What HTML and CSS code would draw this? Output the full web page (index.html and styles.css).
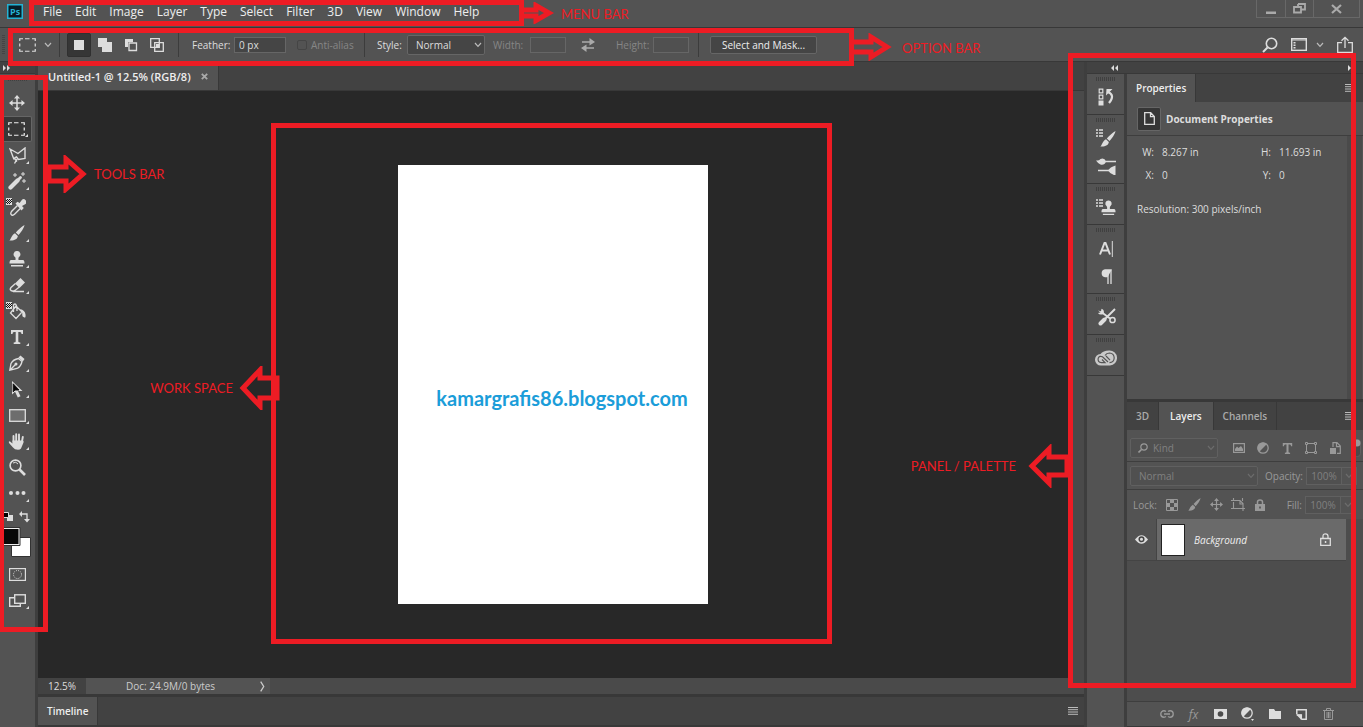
FILE: index.html
```html
<!DOCTYPE html>
<html lang="en">

<head>
    <meta charset="UTF-8">
    <meta name="viewport" content="width=device-width, initial-scale=1.0">
    <title>Untitled-1 @ 12.5% (RGB/8)</title>
    <link rel="stylesheet" href="styles.css">
</head>

<body>

    <!-- Shared icons -->
    <svg class="sprite" aria-hidden="true">
        <symbol id="chevron" viewBox="0 0 8 6"><path d="M1 1l3 3.4L7 1" fill="none" stroke="currentColor" stroke-width="1.2"/></symbol>
        <symbol id="corner" viewBox="0 0 3 3"><path d="M3 0v3H0z" fill="currentColor"/></symbol>
        <symbol id="menu" viewBox="0 0 10 8"><path d="M0 .5h10M0 2.7h10M0 5h10M0 7.3h10" stroke="currentColor"/></symbol>
        <symbol id="move" viewBox="0 0 16 16"><path d="M8 2v12M2 8h12" stroke="currentColor" stroke-width="1.5"/><path d="M8 0l3 3.6H5zM8 16l3-3.6H5zM0 8l3.6-3v6zM16 8l-3.6-3v6z" fill="currentColor"/></symbol>
        <symbol id="brush" viewBox="0 0 16 16"><path d="M15.500 0c-.5 3-3.500 7.500-6 10L6.800 7.500C9 5 12.500 1.500 15.500 0zM6 8.200L8.800 11c0 3-3.800 5-8.500 4.500 2-1.500 2-5.600 5.700-7.300z" fill="currentColor"/></symbol>
        <symbol id="stamp" viewBox="0 0 16 16"><path d="M8 0a3.300 3.300 0 0 1 2 6c-.7.8-.6 1.600-.5 3H14q1.500 0 1.500 3.500H.5Q.5 9 2 9h4.500c.1-1.400.2-2.200-.5-3a3.300 3.300 0 0 1 2-6zM2 14h12v1.500H2z" fill="currentColor"/></symbol>
        <symbol id="type" viewBox="0 0 14 14"><path d="M1 0h12v4h-1.500q0-2-1.500-2H8.300v9.500q0 1 2 1V14H3.700v-1.500q2 0 2-1V2H4Q2.500 2 2.500 4H1z" fill="currentColor"/></symbol>
        <symbol id="checker" viewBox="0 0 6 7"><path d="M0 0h6v7H0z" fill="#ddd"/><path d="M1 1h1v1H1zM3 1h1v1H3zM5 1h1v1H5zM0 2h1v1H0zM2 2h1v1H2zM4 2h1v1H4zM1 3h1v1H1zM3 3h1v1H3zM5 3h1v1H5zM0 4h1v1H0zM2 4h1v1H2zM4 4h1v1H4zM1 5h1v1H1zM3 5h1v1H3z" fill="#111"/></symbol>
        <symbol id="list" viewBox="0 0 7 8"><path d="M0 1h2M0 4h2M0 7h2M3 1h4M3 4h4M3 7h4" stroke="currentColor" stroke-width="1.5"/></symbol>
        <symbol id="half" viewBox="0 0 12 12"><circle cx="6" cy="6" r="5.200" fill="none" stroke="currentColor" stroke-width="1.300"/><path d="M9.900 2.100A5.500 5.500 0 0 0 2.100 9.900z" fill="currentColor"/></symbol>
    </svg>

    <header class="menu-bar">
        <svg class="logo" width="16" height="15" viewBox="0 0 16 15"><rect x=".75" y=".75" width="14.500" height="13.500" fill="#061d27" stroke="#25b2d3" stroke-width="1.500"/><text x="3" y="11" class="logo-text">Ps</text></svg>
        <nav class="menus">
            <button>File</button>
            <button>Edit</button>
            <button>Image</button>
            <button>Layer</button>
            <button>Type</button>
            <button>Select</button>
            <button>Filter</button>
            <button>3D</button>
            <button>View</button>
            <button>Window</button>
            <button>Help</button>
        </nav>
        <div class="window-buttons">
            <button aria-label="Minimize"><svg width="12" height="12" viewBox="0 0 12 12"><path d="M1 8.500h10v2.500H1z" fill="#aaa"/></svg></button>
            <button aria-label="Restore"><svg width="13" height="11" viewBox="0 0 13 11"><path d="M5 1h7v5.500H8M1 4h7v5.500H1zM5 1v3" fill="none" stroke="#aaa" stroke-width="1.800"/></svg></button>
            <button class="wide" aria-label="Close"><svg width="11" height="10" viewBox="0 0 11 10"><path d="M1 1l9 8M10 1L1 9" stroke="#aaa" stroke-width="2.200"/></svg></button>
        </div>
    </header>

    <section class="option-bar">
        <span class="grip-side"></span>
        <button class="preset" aria-label="Tool preset">
            <svg width="17" height="14" viewBox="0 0 17 14"><path d="M.75 3V.75H4M6 .75h4.500M13 .75h3.250V3M16.250 5.500v3M16.250 11v2.250H13M10.500 13.250H6M4 13.250H.75V11M.75 8.500v-3" fill="none" stroke="#ddd" stroke-width="1.200"/></svg>
            <svg class="chev" width="8" height="6"><use href="#chevron"/></svg>
        </button>
        <div class="modes">
            <button class="on" aria-label="New selection"><svg width="14" height="14"><path d="M2 2h10v10H2z" fill="#ddd"/></svg></button>
            <button aria-label="Add to selection"><svg width="14" height="14"><path d="M0 0h9v4h5v10H4V9H0z" fill="#ddd"/></svg></button>
            <button aria-label="Subtract from selection"><svg width="14" height="14"><path d="M1 1h8v3H4v5H1z" fill="#ddd"/><path d="M5 5h7.500v7.500H5z" fill="none" stroke="#ddd" stroke-width="1.300"/></svg></button>
            <button aria-label="Intersect with selection"><svg width="14" height="14"><path d="M.7.7h8.600v8.600H.7zM4.700 4.700h8.600v8.600H4.700z" fill="none" stroke="#ddd" stroke-width="1.300"/><path d="M6 6h3v3H6z" fill="#ddd"/></svg></button>
        </div>
        <div class="feather">
            <label for="feather">Feather:</label>
            <input type="text" id="feather" value="0 px">
        </div>
        <div class="alias off">
            <input type="checkbox" id="alias" disabled>
            <label for="alias">Anti-alias</label>
        </div>
        <div class="style">
            <label for="style">Style:</label>
            <span class="select">
                <select id="style">
                    <option>Normal</option>
                </select>
                <svg class="chev" width="8" height="6"><use href="#chevron"/></svg>
            </span>
        </div>
        <div class="size off">
            <label for="width">Width:</label>
            <input type="text" id="width" disabled>
        </div>
        <button class="swap" aria-label="Swap width and height"><svg width="14" height="14" viewBox="0 0 14 14"><path d="M1 4h9M4 10h9" stroke="#aaa" stroke-width="1.300"/><path d="M8.500 0L14 4 8.500 7.500zM5.500 6.500L0 10l5.500 4z" fill="#aaa"/></svg></button>
        <div class="size off">
            <label for="height">Height:</label>
            <input type="text" id="height" disabled>
        </div>
        <div class="mask">
            <button>Select and Mask...</button>
        </div>
        <div class="app-buttons">
            <button aria-label="Search"><svg width="16" height="16" viewBox="0 0 16 16"><circle cx="9.500" cy="6.500" r="5.200" fill="none" stroke="#ddd" stroke-width="1.600"/><path d="M5.500 10.500L1 15" stroke="#ddd" stroke-width="2"/></svg></button>
            <button aria-label="Workspace">
                <svg width="16" height="13" viewBox="0 0 16 13"><rect x=".7" y=".7" width="14.600" height="11.600" fill="none" stroke="#ddd" stroke-width="1.400"/><path d="M1 2h14" stroke="#ddd"/><path d="M2.500 4h2v1.500h-2zM2.500 6.500h2V8h-2zM2.500 9h2v1.500h-2z" fill="#ddd"/></svg>
                <svg class="chev" width="8" height="6"><use href="#chevron"/></svg>
            </button>
            <button aria-label="Share"><svg width="16" height="17" viewBox="0 0 16 17"><path d="M5 6.700H.7v9.600h14.600V6.700H11M8 12V1.500M4.500 4.800L8 1.300l3.500 3.500" fill="none" stroke="#ddd" stroke-width="1.300"/></svg></button>
        </div>
    </section>

    <main class="workspace">

        <aside class="tools">
            <button class="collapse" aria-label="Expand tools"><svg width="7" height="6" viewBox="0 0 7 6"><path d="M0 0l3 3-3 3zM4 0l3 3-3 3z" fill="#ddd"/></svg></button>
            <div class="tool-list">
                <span class="grip"></span>
                <button aria-label="Move"><svg width="16" height="16"><use href="#move"/></svg></button>
                <button class="on" aria-label="Rectangular marquee"><svg width="17" height="14" viewBox="0 0 17 14"><path d="M.75 3V.75H4M6 .75h4.500M13 .75h3.250V3M16.250 5.500v3M16.250 11v2.250H13M10.500 13.250H6M4 13.250H.75V11M.75 8.500v-3" fill="none" stroke="#eee" stroke-width="1.200"/></svg><svg class="corner"><use href="#corner"/></svg></button>
                <button aria-label="Lasso"><svg width="17" height="17" viewBox="0 0 17 17"><path d="M5 12.500L1 2l8 4.500L16 1v10.500l-6.500 1-2-2.500-2 1M8 12l-2.500 4.500M5 11l3 3.500" fill="none" stroke="currentColor" stroke-width="1.400"/></svg><svg class="corner"><use href="#corner"/></svg></button>
                <button aria-label="Magic wand"><svg width="18" height="18" viewBox="0 0 18 18"><path d="M2.500 15.500l7-7" stroke="currentColor" stroke-width="4.200" stroke-linecap="round"/><path d="M10.500 7.500l2-2" stroke="currentColor" stroke-width="2.800" stroke-linecap="round"/><path d="M7 1v4M5 3h4M15 0v4M13 2h4M16 7v4M14 9h4" stroke="currentColor"/></svg><svg class="corner"><use href="#corner"/></svg></button>
                <button aria-label="Eyedropper"><svg class="badge"><use href="#checker"/></svg><svg width="17" height="17" viewBox="0 0 17 17"><path d="M8.500 6.500l-6 6q-1.500 2.500 0 3.300 1.500 1 3-.5l6-6" fill="none" stroke="currentColor" stroke-width="1.400"/><path d="M6.500 4.500l2-1.800L10.600 4l2-2.800q2-2.200 4 0t0 3.700L13 7l1.800 2-2.300 2.500z" fill="currentColor"/></svg></button>
                <button aria-label="Brush"><svg width="16" height="16"><use href="#brush"/></svg><svg class="corner"><use href="#corner"/></svg></button>
                <button aria-label="Clone stamp"><svg width="16" height="16"><use href="#stamp"/></svg><svg class="corner"><use href="#corner"/></svg></button>
                <button aria-label="Eraser"><svg width="17" height="15" viewBox="0 0 17 15"><path d="M6 5.500L11.500 0l4.500 4.500L10.500 10z" fill="currentColor"/><path d="M6.500 5.500L2 9.500q-1.500 2 0 3l2 .7L6 12.500l4-3.300M4 13.500h11" fill="none" stroke="currentColor" stroke-width="1.400"/></svg><svg class="corner"><use href="#corner"/></svg></button>
                <button aria-label="Paint bucket"><svg class="badge"><use href="#checker"/></svg><svg width="18" height="17" viewBox="0 0 18 17"><path d="M8 3l6 6-6 6.500L2.500 10zM5.500 9V3q0-2 1.500-2 2 0 2 7" fill="none" stroke="currentColor" stroke-width="1.300"/><path d="M12 6q5 1 5.500 5.500t-2 2.500q-1.500 0-1.200-4z" fill="currentColor"/></svg></button>
                <button aria-label="Type"><svg width="14" height="14"><use href="#type"/></svg><svg class="corner"><use href="#corner"/></svg></button>
                <button aria-label="Pen"><svg width="16" height="16" viewBox="0 0 16 16"><path d="M.8 15.200L2 8.500Q4 4.500 9.500 3.500l3.500 3q-1 5-5 7zM.8 15.200L6.500 9.500" fill="none" stroke="currentColor" stroke-width="1.300"/><circle cx="7" cy="9" r="1.500" fill="currentColor"/><path d="M9.500 2.500L11.500.5l4 3.500-1.700 2.500z" fill="currentColor"/></svg><svg class="corner"><use href="#corner"/></svg></button>
                <button aria-label="Path selection"><svg width="12" height="17" viewBox="0 0 12 17"><path d="M1 0v13.500l3-2.800L6.800 16.500l2.700-1.200L7 10h4.500z" fill="#ddd"/><path d="M2.200 2.800v8l1.800-1.800h4z" fill="#050505" stroke="#111"/></svg><svg class="corner"><use href="#corner"/></svg></button>
                <button aria-label="Rectangle"><svg width="17" height="13" viewBox="0 0 17 13"><rect x=".7" y=".7" width="15.600" height="11.600" fill="#6d6d6d" stroke="currentColor" stroke-width="1.300"/></svg><svg class="corner"><use href="#corner"/></svg></button>
                <button aria-label="Hand"><svg width="18" height="17" viewBox="0 0 18 17"><path d="M5.500 9V3M8.200 8V1.200M11 8V1.500M13.800 9.500L14.800 4" stroke="currentColor" stroke-width="1.900" stroke-linecap="round"/><path d="M4.500 7.500h9.800q2.200 0 .8 3L13 15.500q-1 1.300-3 1.300-3.500 0-5-2.300L1 10q-.8-1.700.8-1.700L4.500 10.500z" fill="currentColor"/></svg><svg class="corner"><use href="#corner"/></svg></button>
                <button aria-label="Zoom"><svg width="17" height="17" viewBox="0 0 17 17"><circle cx="6.500" cy="6.500" r="5.400" fill="none" stroke="currentColor" stroke-width="1.600"/><path d="M10.500 10.500l5.500 5.500" stroke="currentColor" stroke-width="2.600"/><path d="M4 4q3-2 5 1" fill="none" stroke="currentColor"/></svg></button>
                <button aria-label="Edit toolbar"><svg width="17" height="4" viewBox="0 0 17 4"><g fill="currentColor"><circle cx="2" cy="2" r="2"/><circle cx="8.500" cy="2" r="2"/><circle cx="14.500" cy="2" r="2"/></g></svg><svg class="corner"><use href="#corner"/></svg></button>
                <div class="swatches">
                    <button aria-label="Default colors, swap colors"><svg width="28" height="12" viewBox="0 0 28 12"><path d="M4 4h6v6H4z" fill="#ddd"/><path d="M.5 1.500h5v5h-5z" fill="#000" stroke="#ddd"/><path d="M18 3h6v6" fill="none" stroke="#ddd" stroke-width="1.300"/><path d="M19 0v6l-3-3zM21 8h6l-3 3.500z" fill="#ddd"/></svg></button>
                    <button aria-label="Foreground and background color"><svg width="28" height="31" viewBox="0 0 28 31"><path d="M8.500 10.500h19v19h-19z" fill="#fff" stroke="#333"/><path d="M-3 .5h20v18H-3z" fill="#eee" stroke="#333"/><path d="M-3 2h18.500v15H-3z" fill="#080808"/></svg></button>
                </div>
                <button aria-label="Quick mask"><svg width="17" height="13" viewBox="0 0 17 13"><rect x=".6" y=".6" width="15.800" height="11.800" fill="none" stroke="currentColor" stroke-width="1.200"/><circle cx="8.500" cy="6.500" r="4" fill="none" stroke="currentColor" stroke-dasharray="1 1.100"/></svg></button>
                <button aria-label="Screen mode"><svg width="17" height="13" viewBox="0 0 17 13"><path d="M5 3.700H.7v8.600h10.600V9.500" fill="none" stroke="currentColor" stroke-width="1.400"/><rect x="5.700" y=".8" width="10.600" height="8.500" fill="none" stroke="currentColor" stroke-width="1.400"/></svg><svg class="corner"><use href="#corner"/></svg></button>
            </div>
        </aside>

        <section class="document">
            <div class="tabs doc-tabs">
                <div class="tab on">Untitled-1 @ 12.5% (RGB/8)
                    <button aria-label="Close document"><svg width="7" height="7" viewBox="0 0 7 7"><path d="M.8.8l5.400 5.400M6.200.8L.8 6.200" stroke="#aaa" stroke-width="1.800"/></svg></button>
                </div>
            </div>
            <div class="view">
                <div class="canvas">
                    <div class="paper"><p>kamargrafis86.blogspot.com</p></div>
                </div>
            </div>
            <footer class="status">
                <span class="zoom">12.5%</span>
                <button>Doc: 24.9M/0 bytes <svg width="5" height="11" viewBox="0 0 5 11"><path d="M.7.7l3 4.800-3 4.800" fill="none" stroke="#ccc" stroke-width="1.300"/></svg></button>
            </footer>
            <div class="tabs timeline">
                <div class="tab on">Timeline</div>
                <button class="panel-menu" aria-label="Timeline menu"><svg width="10" height="8"><use href="#menu"/></svg></button>
            </div>
        </section>

        <aside class="dock">
            <div class="dock-head">
                <svg width="7" height="6" viewBox="0 0 7 6"><path d="M3 0L0 3l3 3zM7 0L4 3l3 3z" fill="#ddd"/></svg>
                <svg width="7" height="6" viewBox="0 0 7 6"><path d="M0 0l3 3-3 3zM4 0l3 3-3 3z" fill="#ddd"/></svg>
            </div>
            <div class="dock-body">
                <div class="icon-column">
                    <div class="icon-group">
                        <button aria-label="History"><svg width="16" height="18" viewBox="0 0 16 18"><path d="M1.200 1.200h3.600v3.600H1.200zM1.200 7.200h3.600v3.600H1.200z" fill="none" stroke="currentColor" stroke-width="1.200"/><path d="M.5 12.500h5v5h-5zM8 7.500L8.500 1h6z" fill="currentColor"/><path d="M10 4q7.500 3 1 11" fill="none" stroke="currentColor" stroke-width="2.200"/></svg></button>
                    </div>
                    <div class="icon-group">
                        <button aria-label="Brushes"><svg width="21" height="18" viewBox="0 0 21 18"><use href="#list" width="7" height="8"/><use href="#brush" x="4" y="2" width="16" height="16"/></svg></button>
                        <button aria-label="Brush settings"><svg width="20" height="17" viewBox="0 0 20 17"><path d="M9 3.500h11M2 12.500h11" stroke="currentColor" stroke-width="1.700"/><path d="M0 2.500q3 .5 4.500-1.500 4-1.500 5.500 2.500-1.500 4-5.500 3Q2 5.500 0 2.500zM12 12.500q2-3.500 7.500-5v10q-5.500-1.500-7.500-5z" fill="currentColor"/></svg></button>
                    </div>
                    <div class="icon-group">
                        <button aria-label="Clone source"><svg width="20" height="17" viewBox="0 0 20 17"><use href="#list" width="7" height="8"/><use href="#stamp" x="5" y="1" width="15" height="16"/></svg></button>
                    </div>
                    <div class="icon-group">
                        <button aria-label="Character"><svg width="14" height="17" viewBox="0 0 14 17"><path d="M1 14.500L5.500 3h1L11 14.500M3 10.500h6.500" fill="none" stroke="currentColor" stroke-width="2"/><path d="M13.300 1v16" stroke="currentColor"/></svg></button>
                        <button aria-label="Paragraph"><svg width="12" height="15" viewBox="0 0 12 15"><path d="M12 .3H5a4 4 0 0 0 0 7.900h2.500z" fill="currentColor"/><path d="M8 1v14M11 1v14" stroke="currentColor" stroke-width="1.300"/></svg></button>
                    </div>
                    <div class="icon-group">
                        <button aria-label="Tool presets"><svg width="19" height="18" viewBox="0 0 19 18"><path d="M3.500 15.500l4-4" stroke="currentColor" stroke-width="4" stroke-linecap="round"/><path d="M8 11L18 1M5 4.500l8 6" stroke="currentColor" stroke-width="1.900"/><path d="M1 2.500l3 .7.5-2.500Q8 2 6.500 6q-4 1.500-5.500-1l2.500-.5z" fill="currentColor"/><circle cx="15.500" cy="12" r="2.600" fill="none" stroke="currentColor" stroke-width="1.500"/></svg></button>
                    </div>
                    <div class="icon-group">
                        <button aria-label="Libraries"><svg width="22" height="16" viewBox="0 0 22 16"><path d="M6 15.500A5.500 5.500 0 0 1 5.500 4Q8 .5 14 .5a7.500 7.500 0 0 1 1 15z" fill="#c9c9c9"/><path d="M13 12L7.500 6.800q-3-1.500-4.300 1.400-.8 4 3.300 4.500H10L7 9.500M11 6l4 4.200M10 5.500Q11.500 3 14.500 3q4.500.3 4.700 5-.3 4.300-4.700 4.700" fill="none" stroke="#555" stroke-width="1.200"/></svg></button>
                    </div>
                </div>

                <div class="panels">
                    <section class="properties">
                        <div class="tabs">
                            <div class="tab on">Properties</div>
                            <button class="panel-menu" aria-label="Properties menu"><svg width="10" height="8"><use href="#menu"/></svg></button>
                        </div>
                        <h2><span><svg width="11" height="13" viewBox="0 0 11 13"><path d="M.7.7h6L10.300 4.500v7.800H.7zM6.500.7v4h4" fill="none" stroke="#ddd" stroke-width="1.300"/></svg></span>Document Properties</h2>
                        <div class="prop-body">
                            <dl>
                                <dt>W:</dt><dd>8.267 in</dd>
                                <dt>H:</dt><dd>11.693 in</dd>
                                <dt>X:</dt><dd>0</dd>
                                <dt>Y:</dt><dd>0</dd>
                            </dl>
                            <p>Resolution: 300 pixels/inch</p>
                        </div>
                    </section>

                    <section class="layers">
                        <div class="tabs">
                            <button class="tab">3D</button>
                            <button class="tab on">Layers</button>
                            <button class="tab">Channels</button>
                            <button class="panel-menu" aria-label="Layers menu"><svg width="10" height="8"><use href="#menu"/></svg></button>
                        </div>
                        <div class="layer-row filter">
                            <span class="select kind">
                                <svg class="lens" width="10" height="10" viewBox="0 0 10 10"><circle cx="6" cy="4" r="3.200" fill="none" stroke="currentColor" stroke-width="1.200"/><path d="M3.500 6.500L.5 9.500" stroke="currentColor" stroke-width="1.600"/></svg>
                                <select aria-label="Filter type" disabled>
                                    <option>Kind</option>
                                </select>
                                <svg class="chev" width="8" height="6"><use href="#chevron"/></svg>
                            </span>
                            <button aria-label="Pixel layers"><svg width="12" height="10" viewBox="0 0 12 10"><rect x=".6" y=".6" width="10.800" height="8.800" fill="none" stroke="currentColor" stroke-width="1.200"/><path d="M2 8V6l2-2.500L5.500 5 8 3l2 3v2z" fill="currentColor"/></svg></button>
                            <button aria-label="Adjustment layers"><svg width="12" height="12"><use href="#half"/></svg></button>
                            <button aria-label="Type layers"><svg width="11" height="11"><use href="#type"/></svg></button>
                            <button aria-label="Shape layers"><svg width="12" height="12" viewBox="0 0 12 12"><path d="M2.500 1.500h7M2.500 10.500h7M1.500 2.500v7M10.500 2.500v7" stroke="currentColor"/><path d="M.5.5h2v2h-2zM9.500.5h2v2h-2zM.5 9.500h2v2h-2zM9.500 9.500h2v2h-2z" fill="none" stroke="currentColor"/></svg></button>
                            <button aria-label="Smart objects"><svg width="11" height="12" viewBox="0 0 11 12"><path d="M3 5V.7h4L10.300 4v7.300H7M6.500.7v4H10" fill="none" stroke="currentColor" stroke-width="1.200"/><path d="M0 6h6v6H0z" fill="currentColor"/></svg></button>
                            <button class="switch" aria-label="Filter switch"><svg width="8" height="18" viewBox="0 0 8 18"><rect x=".5" y=".5" width="7" height="17" rx="3" fill="#4a4a4a" stroke="#606060"/><circle cx="4" cy="4" r="3.500" fill="currentColor"/></svg></button>
                        </div>
                        <div class="layer-row">
                            <span class="select blend">
                                <select aria-label="Blend mode" disabled>
                                    <option>Normal</option>
                                </select>
                                <svg class="chev" width="8" height="6"><use href="#chevron"/></svg>
                            </span>
                            <label for="opacity">Opacity:</label>
                            <input type="text" id="opacity" value="100%" disabled>
                            <span class="stepper"><svg width="8" height="6"><use href="#chevron"/></svg></span>
                        </div>
                        <div class="layer-row lock">
                            <span class="lock-label">Lock:</span>
                            <button aria-label="Lock transparent pixels"><svg width="12" height="12" viewBox="0 0 12 12"><path d="M.5.5h11v11H.5z" fill="none" stroke="currentColor"/><path d="M4 0h4v4H4zM0 4h4v4H0zM8 4h4v4H8zM4 8h4v4H4z" fill="currentColor"/></svg></button>
                            <button aria-label="Lock image pixels"><svg width="13" height="13"><use href="#brush"/></svg></button>
                            <button aria-label="Lock position"><svg width="13" height="13"><use href="#move"/></svg></button>
                            <button aria-label="Lock artboard"><svg width="14" height="13" viewBox="0 0 14 13"><path d="M0 2.500h9l3 3V13M2.500 0v2M2.500 4v6.500H14M9 2.500V6h3.500M0 10.500h2M11.500 0v3" fill="none" stroke="currentColor" stroke-width="1.100"/></svg></button>
                            <button aria-label="Lock all"><svg width="10" height="12" viewBox="0 0 10 12"><path d="M2.500 5.500V3q0-2 2.500-2t2.500 2v2.500" fill="none" stroke="currentColor" stroke-width="1.500"/><path d="M0 5h10v7H0z" fill="currentColor"/><path d="M4.300 7.500h1.400v2H4.300z" fill="#444"/></svg></button>
                            <label for="fill">Fill:</label>
                            <input type="text" id="fill" value="100%" disabled>
                            <span class="stepper"><svg width="8" height="6"><use href="#chevron"/></svg></span>
                        </div>
                        <div class="layer-list">
                            <div class="layer">
                                <button class="eye" aria-label="Layer visibility"><svg width="13" height="9" viewBox="0 0 13 9"><path d="M0 4.500Q6.500-4 13 4.500 6.500 13 0 4.500z" fill="#ddd"/><circle cx="6.500" cy="4.300" r="2.300" fill="#ddd" stroke="#444" stroke-width="1.500"/></svg></button>
                                <div class="layer-name">
                                    <span class="thumb"></span>
                                    <em>Background</em>
                                    <svg width="11" height="13" viewBox="0 0 11 13"><path d="M3 5.500V3.200Q3 .8 5.500.8T8 3.200v2.300M.7 5.500h9.600v6.800H.7z" fill="none" stroke="#ddd" stroke-width="1.300"/><path d="M4.800 8h1.500v2H4.800z" fill="#ddd"/></svg>
                                </div>
                            </div>
                        </div>
                        <div class="layer-actions">
                            <button class="dim" aria-label="Link layers"><svg width="14" height="8" viewBox="0 0 14 8"><path d="M6 1.500Q5 .8 4 .8a3.200 3.200 0 0 0 0 6.400q1 0 2-.7M8 1.500Q9 .8 10 .8a3.200 3.200 0 0 1 0 6.400q-1 0-2-.7M4 4h6" fill="none" stroke="currentColor" stroke-width="1.400"/></svg></button>
                            <button class="dim fx" aria-label="Layer style">fx</button>
                            <button aria-label="Add mask"><svg width="13" height="10" viewBox="0 0 13 10"><path d="M0 0h13v10H0z" fill="currentColor"/><circle cx="6.500" cy="5" r="2.800" fill="#4a4a4a"/></svg></button>
                            <button aria-label="New adjustment layer"><svg width="13" height="14" viewBox="0 0 13 14"><use href="#half" width="12" height="12"/><path d="M10 12h3l-1.500 2z" fill="currentColor"/></svg></button>
                            <button aria-label="New group"><svg width="12" height="10" viewBox="0 0 12 10"><path d="M0 0h5l1.300 2H12v8H0z" fill="currentColor"/></svg></button>
                            <button aria-label="New layer"><svg width="11" height="11" viewBox="0 0 11 11"><path d="M.8 5V.8h9.400v9.400H5.500M.8 6h4.500v4.500" fill="none" stroke="currentColor" stroke-width="1.500"/><path d="M0 5.500L5.500 11V5.500z" fill="currentColor"/></svg></button>
                            <button class="dim" aria-label="Delete layer"><svg width="11" height="12" viewBox="0 0 11 12"><path d="M0 2.500h11M3.500 2.500v-2h4v2M1.500 2.500v9h8v-9M4 4v6M5.500 4v6M7 4v6" fill="none" stroke="currentColor"/></svg></button>
                        </div>
                    </section>
                </div>
            </div>
        </aside>
    </main>

    <!-- Callouts over the interface -->
    <div class="mark mark-menu">
        <svg width="32" height="22" viewBox="0 0 32 22"><path d="M0 8h13V3.500L26 11 13 18.500V14H0" /></svg>
        <span>MENU BAR</span>
    </div>
    <div class="mark mark-option">
        <svg width="40" height="28" viewBox="0 0 40 28"><path d="M0 9h18V4l16 10-16 10v-5H0" /></svg>
        <span>OPTION BAR</span>
    </div>
    <div class="mark mark-tools">
        <svg width="42" height="38" viewBox="0 0 42 38"><path d="M2 12h17V4l17 15-17 15v-8H2z" /></svg>
        <span>TOOLS BAR</span>
    </div>
    <div class="mark mark-left mark-work">
        <span>WORK SPACE</span>
        <svg width="42" height="44" viewBox="0 0 42 44"><path d="M39 12H22V4L5 22l17 18v-8h17z" /></svg>
    </div>
    <div class="mark mark-left mark-panel">
        <span>PANEL / PALETTE</span>
        <svg width="42" height="44" viewBox="0 0 42 44"><path d="M40 13H22V5L5 22l17 17v-8h18z" /></svg>
    </div>

</body>

</html>
```
FILE: styles.css
```css
* {
    box-sizing: border-box;
}

body {
    font-family: "Open Sans", "Noto Sans", sans-serif;
    font-size: 10px;
    color: #ddd;
    background-color: #535353;
    margin: 0;
    position: relative;
    min-height: 100vh;
    display: flex;
    flex-direction: column;
    overflow: hidden;
}

button,
input,
select {
    font: inherit;
    color: inherit;
    background: none;
    border: none;
    border-radius: 0;
    margin: 0;
    padding: 0;
}

button {
    display: flex;
    align-items: center;
    justify-content: center;
    flex-shrink: 0;
    white-space: nowrap;
}

svg {
    display: block;
    flex-shrink: 0;
}

.sprite {
    position: absolute;
    width: 0;
    height: 0;
}

/* Menu bar */
.menu-bar {
    display: flex;
    height: 28px;
    border-bottom: 1px solid #383838;
}

.logo {
    margin: 4px 14px 0 7px;
}

.logo-text {
    font-size: 9px;
    font-weight: bold;
    fill: #25b2d3;
}

.menus {
    display: flex;
    gap: 13px;
    height: 23px;
    margin-left: 6px;
    font-size: 12px;
    color: #eee;
}

.window-buttons {
    display: flex;
    height: 18px;
    margin-left: auto;
    margin-right: 3px;
    border: 1px solid #686868;
    border-top: none;
}

.window-buttons button {
    width: 28px;
}

.window-buttons button + button {
    border-left: 1px solid #686868;
}

.window-buttons .wide {
    width: 46px;
}

/* Option bar */
.option-bar {
    display: flex;
    align-items: center;
    height: 34px;
    border-bottom: 1px solid #383838;
}

.option-bar > div,
.preset {
    display: flex;
    align-items: center;
    height: 24px;
}

.grip-side {
    width: 3px;
    height: 20px;
    margin: 0 14px 0 2px;
    background: repeating-linear-gradient(#444 0 1px, #535353 1px 2px);
}

.chev {
    color: #bbb;
}

.preset {
    gap: 8px;
    width: 41px;
    padding-right: 8px;
    border-right: 1px solid #3c3c3c;
}

.modes {
    gap: 2px;
    width: 119px;
    padding-left: 7px;
    border-right: 1px solid #3c3c3c;
}

.modes button {
    width: 24px;
    height: 24px;
}

.modes .on {
    background-color: #363636;
    border: 1px solid #303030;
    border-radius: 2px;
}

.option-bar input[type="text"] {
    height: 16px;
    padding: 0 4px;
    background-color: #454545;
    border: 1px solid #666;
}

.option-bar .off {
    color: #868686;
}

.option-bar .off input[type="text"] {
    background-color: #505050;
    width: 36px;
}

.feather {
    width: 107px;
    padding-left: 13px;
    justify-content: space-between;
}

.feather input[type="text"] {
    width: 52px;
}

.alias {
    width: 79px;
    gap: 4px;
    padding-left: 11px;
    border-right: 1px solid #3c3c3c;
}

.alias input {
    appearance: none;
    width: 10px;
    height: 10px;
    border: 1px solid #454545;
    border-radius: 2px;
}

.style {
    width: 120px;
    padding-left: 12px;
    justify-content: space-between;
}

.select {
    position: relative;
    display: flex;
    align-items: center;
}

.select select {
    appearance: none;
    width: 100%;
    height: 20px;
    padding-left: 8px;
    border: 1px solid #666;
    border-radius: 2px;
    background-color: #454545;
    opacity: 1;
}

.select .chev {
    position: absolute;
    right: 3px;
}

.style .select {
    width: 78px;
}

.size {
    width: 73px;
    justify-content: space-between;
}

.option-bar .size {
    margin-left: 8px;
}

.swap {
    width: 20px;
    margin: 0 10px 0 12px;
}

.mask {
    margin-left: 9px;
    padding-left: 11px;
    border-left: 1px solid #3c3c3c;
}

.mask button {
    width: 107px;
    height: 18px;
    background-color: #454545;
    border: 1px solid #666;
    border-radius: 2px;
    color: #eee;
}

.option-bar .app-buttons {
    gap: 13px;
    margin-left: auto;
    margin-right: 10px;
}

.app-buttons button {
    gap: 9px;
}

/* Main area */
.workspace {
    display: flex;
    flex: 1;
    background-color: #383838;
}

.tools {
    width: 38px;
    flex-shrink: 0;
    display: flex;
    flex-direction: column;
    border-right: 3px solid #3e3e3e;
}

.collapse {
    height: 12px;
    padding-left: 3px;
    justify-content: flex-start;
    background-color: #424242;
    border-bottom: 1px solid #383838;
}

.tool-list {
    flex: 1;
    background-color: #535353;
    color: #ddd;
}

.grip {
    display: block;
    width: 20px;
    height: 3px;
    margin: 4px 8px 9px;
    background: repeating-linear-gradient(90deg, #404040 0 1px, #535353 1px 2px);
}

.tool-list > button {
    position: relative;
    width: 30px;
    height: 26px;
    margin-left: 2px;
}

.tool-list .on {
    background-color: #383838;
    border: 1px solid #666;
    border-left: none;
    border-radius: 2px;
}

.corner {
    position: absolute;
    right: 3px;
    bottom: 4px;
    width: 3px;
    height: 3px;
}

.badge {
    position: absolute;
    left: 4px;
    top: 4px;
    width: 6px;
    height: 7px;
}

.swatches {
    margin: 5px 0 3px 3px;
}

.swatches button + button {
    margin-top: 4px;
}

/* Document window */
.document {
    flex: 1;
    min-width: 0;
    display: flex;
    flex-direction: column;
}

.tabs {
    display: flex;
    height: 28px;
    flex-shrink: 0;
    background-color: #424242;
}

.tab {
    display: flex;
    align-items: center;
    padding: 0 9px;
    border-right: 1px solid #383838;
    font-weight: 600;
    color: #aaa;
    white-space: nowrap;
}

.tab.on {
    background-color: #535353;
    color: #eee;
}

.doc-tabs {
    height: 29px;
    border-bottom: 1px solid #383838;
}

.doc-tabs .tab {
    gap: 10px;
    padding: 0 10px;
    font-size: 11px;
}

.view {
    flex: 1;
    display: flex;
    padding-right: 16px;
    background-color: #4a4a4a;
}

.canvas {
    flex: 1;
    display: flex;
    align-items: center;
    justify-content: center;
    background-color: #282828;
}

.paper {
    width: 310px;
    height: 439px;
    display: flex;
    justify-content: center;
    align-items: center;
    padding: 26px 0 0 18px;
    background-color: #fff;
}

.paper p {
    margin: 0;
    font-family: Lato, sans-serif;
    font-size: 20px;
    font-weight: bold;
    color: #1b9dd9;
}

.status {
    display: flex;
    height: 16px;
    margin-bottom: 3px;
    background-color: #4a4a4a;
}

.zoom {
    width: 48px;
    padding-left: 10px;
    line-height: 16px;
    background-color: #424242;
}

.status button {
    width: 184px;
    padding: 0 5px 0 40px;
    justify-content: space-between;
    background-color: #535353;
    color: #ccc;
}

.timeline {
    height: 30px;
    border-bottom: 2px solid #383838;
}

.panel-menu {
    margin-left: auto;
    margin-right: 6px;
    color: #bbb;
}

.panels .panel-menu {
    margin-right: 8px;
}

/* Dock on the right */
.dock {
    width: 279px;
    flex-shrink: 0;
    display: flex;
    flex-direction: column;
    border-left: 3px solid #3e3e3e;
}

.dock-head {
    display: flex;
    justify-content: space-between;
    align-items: center;
    height: 12px;
    padding: 0 8px 0 24px;
    background-color: #424242;
    border-bottom: 1px solid #383838;
}

.dock-body {
    flex: 1;
    display: flex;
}

.icon-column {
    width: 40px;
    background-color: #535353;
    border-right: 3px solid #3e3e3e;
}

.icon-group {
    padding: 9px 0 3px;
    border-bottom: 1px solid #383838;
    background: repeating-linear-gradient(90deg, #404040 0 1px, #535353 1px 2px) no-repeat 9px 3px / 20px 4px;
}

.icon-group button {
    width: 38px;
    height: 28px;
}

.panels {
    flex: 1;
    min-width: 0;
    display: flex;
    flex-direction: column;
    gap: 3px;
}

.properties {
    flex: 1;
    display: flex;
    flex-direction: column;
    background-color: #535353;
}

.properties h2 {
    display: flex;
    align-items: center;
    gap: 5px;
    height: 34px;
    margin: 0;
    padding-left: 10px;
    font-size: 10px;
    font-weight: bold;
    border-bottom: 1px solid #3e3e3e;
}

.properties h2 span {
    display: flex;
    align-items: center;
    justify-content: center;
    width: 24px;
    height: 24px;
    background-color: #363636;
    border: 1px solid #666;
    border-radius: 2px;
}

.prop-body {
    flex: 1;
    padding: 5px 10px;
    margin-right: 1px;
    border-right: 15px solid #4a4a4a;
}

.prop-body dl {
    display: grid;
    grid-template-columns: 17px 101px 16px 1fr;
    margin: 0;
    line-height: 23px;
}

.prop-body dt {
    text-align: right;
}

.prop-body dd {
    margin: 0 0 0 8px;
}

.prop-body p {
    margin: 15px 0 0;
}

/* Layers panel */
.layers {
    display: flex;
    flex-direction: column;
    background-color: #535353;
}

.layers .tab.on {
    padding: 0 11px;
}

.layer-row {
    display: flex;
    align-items: center;
    height: 28px;
    padding-left: 3px;
    border-bottom: 1px solid #3e3e3e;
    color: #999;
}

.layer-row select,
.layer-row input {
    color: #808080;
    background-color: #505050;
    border: 1px solid #606060;
}

.layer-row .chev,
.stepper {
    color: #6c6c6c;
}

.layer-row.filter {
    height: 32px;
    padding-top: 5px;
}

.filter button {
    width: 24px;
}

.filter .switch {
    width: 20px;
}

.kind {
    width: 88px;
    flex-shrink: 0;
    margin-right: 9px;
}

.kind select {
    padding-left: 22px;
}

.lens {
    position: absolute;
    left: 8px;
}

.blend {
    width: 128px;
    margin-right: 7px;
}

.layer-row input {
    width: 36px;
    height: 18px;
    margin-left: 3px;
    text-align: center;
}

.stepper {
    display: flex;
    align-items: center;
    justify-content: center;
    width: 15px;
    height: 18px;
    border: 1px solid #606060;
    border-left: none;
}

.layer-row.lock {
    height: 29px;
    padding-left: 6px;
    border-bottom: none;
}

.lock-label {
    width: 28px;
}

.lock button {
    width: 22px;
}

.lock label {
    margin-left: auto;
}

.lock .stepper {
    margin-right: 7px;
}

.layer-list {
    flex: 1;
    min-height: 183px;
    background-color: #4d4d4d;
    padding-right: 17px;
    border-bottom: 1px solid #3e3e3e;
}

.layer {
    display: flex;
    height: 42px;
    border-bottom: 1px solid #444;
}

.eye {
    width: 30px;
    background-color: #535353;
    border-right: 1px solid #444;
}

.layer-name {
    flex: 1;
    display: flex;
    align-items: center;
    gap: 9px;
    padding: 0 15px 0 4px;
    background-color: #6a6a6a;
    color: #eee;
}

.layer-name em {
    flex: 1;
}

.thumb {
    width: 24px;
    height: 32px;
    background-color: #fff;
    border: 1px solid #222;
}

.layer-actions {
    display: flex;
    justify-content: flex-end;
    height: 25px;
    padding-right: 21px;
    border-bottom: 1px solid #383838;
}

.layer-actions button {
    width: 27px;
}

.layer-actions .dim {
    color: #999;
}

.layer-actions .fx {
    font-size: 12px;
    font-style: italic;
}

/* Callouts */
.mark {
    position: absolute;
    display: flex;
    align-items: center;
    border: 5px solid #ed1c24;
    font-family: Lato, sans-serif;
    font-size: 13px;
    color: #ed1c24;
    white-space: nowrap;
    pointer-events: none;
}

.mark svg {
    position: absolute;
    left: 100%;
    margin-left: 4px;
    fill: none;
    stroke: #ed1c24;
    stroke-width: 5;
}

.mark span {
    position: absolute;
    left: 100%;
    line-height: 16px;
}

.mark-left svg {
    left: auto;
    right: 100%;
    margin-right: 4px;
}

.mark-left span {
    left: auto;
    right: 100%;
}

.mark-menu {
    left: 29px;
    top: 0;
    width: 495px;
    height: 26px;
}

.mark-menu span {
    margin: 2px 0 0 42px;
}

.mark-option {
    left: 8px;
    top: 28px;
    width: 846px;
    height: 38px;
}

.mark-option span {
    margin: 2px 0 0 53px;
}

.mark-tools {
    left: -1px;
    top: 75px;
    width: 49px;
    height: 557px;
}

.mark-tools svg {
    top: 75px;
}

.mark-tools span {
    top: 86px;
    margin-left: 51px;
}

.mark-work {
    left: 271px;
    right: 531px;
    top: 123px;
    bottom: 83px;
}

.mark-work svg {
    margin-right: -4px;
    top: 238px;
}

.mark-work span {
    top: 252px;
    margin-right: 43px;
}

.mark-panel {
    right: 7px;
    top: 53px;
    width: 288px;
    bottom: 39px;
}

.mark-panel svg {
    top: 386px;
}

.mark-panel span {
    top: 400px;
    margin-right: 57px;
}
```
